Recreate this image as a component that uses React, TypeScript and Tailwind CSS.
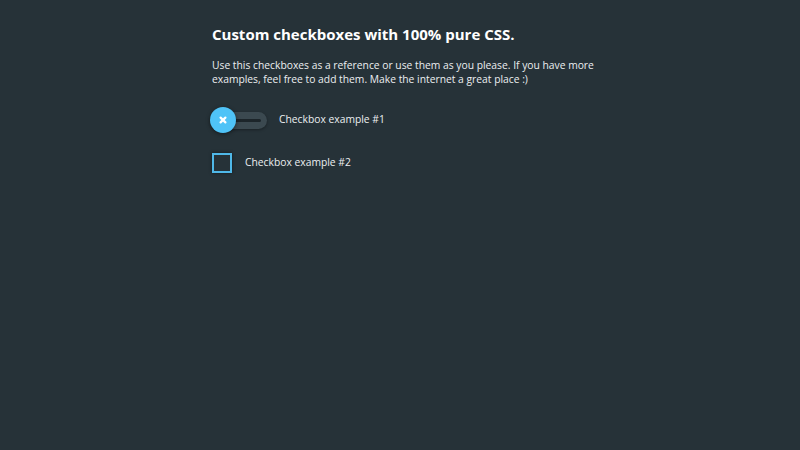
export default function App() {
  return (
    <div
      className="min-h-[450px] w-full bg-[#263238] text-white"
      style={{ fontFamily: '"Open Sans", sans-serif' }}
    >
      <div className="mx-auto w-[376px] pt-[24px]">
        <h1 className="text-[15px] font-bold leading-[20px]">Custom checkboxes with 100% pure CSS.</h1>
        <p className="mt-[14px] w-[384px] text-[10.3px] leading-[14px] text-[#eceff1]">
          Use this checkboxes as a reference or use them as you please. If you have more
          examples, feel free to add them. Make the internet a great place :)
        </p>

        {/* toggle switch */}
        <label className="mt-[21px] flex items-center">
          <span className="relative -ml-[2px] h-[26px] w-[57px] shrink-0">
            <span className="absolute left-[1px] right-0 top-[5px] h-[17px] rounded-full bg-[#3b4950] shadow-[0_1px_3px_rgba(0,0,0,0.35)]" />
            <span className="absolute left-[24px] top-[12px] h-[3px] w-[27px] rounded-full bg-[#1c252a]" />
            <span className="absolute left-0 top-0 flex h-[26px] w-[26px] items-center justify-center rounded-full bg-[#4fc3f7] shadow-[0_1px_4px_rgba(0,0,0,0.45)]">
              <svg width="8" height="8" viewBox="0 0 10 10">
                <path d="M2 2 L8 8 M8 2 L2 8" stroke="white" strokeWidth="2.8" strokeLinecap="round" />
              </svg>
            </span>
          </span>
          <span className="ml-[12px] text-[10.3px] text-[#eceff1]">Checkbox example #1</span>
        </label>

        {/* square checkbox */}
        <label className="mt-[20px] flex items-center">
          <span className="h-[20px] w-[20px] shrink-0 border-2 border-[#4fb8e8] bg-[#263238] shadow-[0_0_3px_rgba(0,0,0,0.5)]" />
          <span className="ml-[13px] text-[10.3px] text-[#eceff1]">Checkbox example #2</span>
        </label>
      </div>
    </div>
  );
}
